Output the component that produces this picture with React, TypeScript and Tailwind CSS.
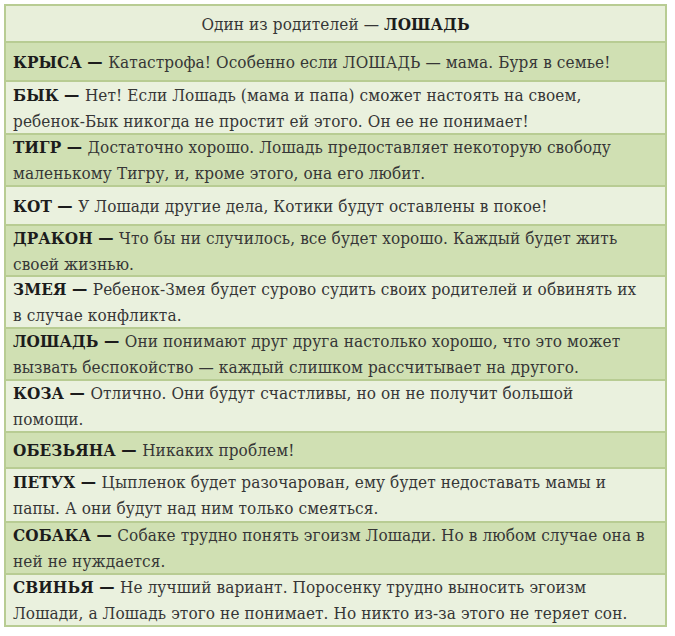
const ROWS: { name: string; lines: string[]; h: string; dark: boolean }[] = [
  { name: "КРЫСА", lines: ["Катастрофа! Особенно если ЛОШАДЬ — мама. Буря в семье!"], h: "h-[39px]", dark: true },
  {
    name: "БЫК",
    lines: [
      "Нет! Если Лошадь (мама и папа) сможет настоять на своем,",
      "ребенок-Бык никогда не простит ей этого. Он ее не понимает!",
    ],
    h: "h-[53px]",
    dark: false,
  },
  {
    name: "ТИГР",
    lines: [
      "Достаточно хорошо. Лошадь предоставляет некоторую свободу",
      "маленькому Тигру, и, кроме этого, она его любит.",
    ],
    h: "h-[52px]",
    dark: true,
  },
  { name: "КОТ", lines: ["У Лошади другие дела, Котики будут оставлены в покое!"], h: "h-[39px]", dark: false },
  {
    name: "ДРАКОН",
    lines: ["Что бы ни случилось, все будет хорошо. Каждый будет жить", "своей жизнью."],
    h: "h-[51px]",
    dark: true,
  },
  {
    name: "ЗМЕЯ",
    lines: ["Ребенок-Змея будет сурово судить своих родителей и обвинять их", "в случае конфликта."],
    h: "h-[52px]",
    dark: false,
  },
  {
    name: "ЛОШАДЬ",
    lines: [
      "Они понимают друг друга настолько хорошо, что это может",
      "вызвать беспокойство — каждый слишком рассчитывает на другого.",
    ],
    h: "h-[52px]",
    dark: true,
  },
  {
    name: "КОЗА",
    lines: ["Отлично. Они будут счастливы, но он не получит большой", "помощи."],
    h: "h-[52px]",
    dark: false,
  },
  { name: "ОБЕЗЬЯНА", lines: ["Никаких проблем!"], h: "h-[36px]", dark: true },
  {
    name: "ПЕТУХ",
    lines: [
      "Цыпленок будет разочарован, ему будет недоставать мамы и",
      "папы. А они будут над ним только смеяться.",
    ],
    h: "h-[54px]",
    dark: false,
  },
  {
    name: "СОБАКА",
    lines: ["Собаке трудно понять эгоизм Лошади. Но в любом случае она в", "ней не нуждается."],
    h: "h-[52px]",
    dark: true,
  },
  {
    name: "СВИНЬЯ",
    lines: [
      "Не лучший вариант. Поросенку трудно выносить эгоизм",
      "Лошади, а Лошадь этого не понимает. Но никто из-за этого не теряет сон.",
    ],
    h: "h-[52px]",
    dark: false,
  },
];

export default function App() {
  return (
    <div
      className="min-h-[636px] bg-white pl-[4px] pt-[4px]"
      style={{ fontFamily: '"DejaVu Serif Condensed", "DejaVu Serif", serif' }}
    >
      <div className="w-[663px] border-x-2 border-t-2 border-[#b8cc93] text-[17px] leading-[26px] tracking-[0.1px] text-[#363636]">
        <div className="flex h-[37px] items-center justify-center border-b-2 border-[#b8cc93] bg-[#e8efda]">
          Один из родителей — <b className="ml-[5px] font-bold text-[#1c1c1c]">ЛОШАДЬ</b>
        </div>
        {ROWS.map((r) => (
          <div
            key={r.name}
            className={`flex ${r.h} flex-col justify-center whitespace-nowrap border-b-2 border-[#b8cc93] pl-[7px] ${
              r.dark ? "bg-[#d0e0b3]" : "bg-[#eaf1de]"
            }`}
          >
            {r.lines.map((line, i) => (
              <div key={i}>
                {i === 0 && <b className="font-bold text-[#1c1c1c]">{r.name} — </b>}
                {line}
              </div>
            ))}
          </div>
        ))}
      </div>
    </div>
  );
}
